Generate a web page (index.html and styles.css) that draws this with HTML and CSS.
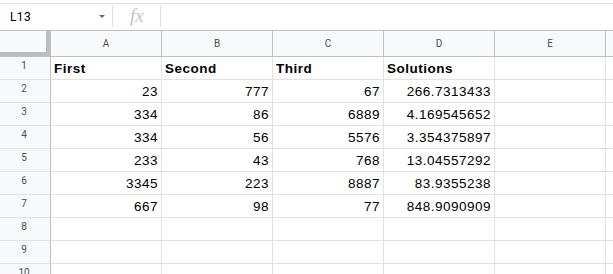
FILE: index.html
```html
<!DOCTYPE html>
<html lang="en">
<head>
    <meta charset="UTF-8">
    <meta name="viewport" content="width=device-width, initial-scale=1.0">
    <title>Sheet</title>
    <link rel="stylesheet" href="styles.css">
</head>
<body>
    <div class="formula-bar">
        <div class="name-box">
            <span class="cell-ref">L13</span>
            <span class="caret"></span>
        </div>
        <div class="fx">fx</div>
        <div class="formula-input"></div>
    </div>

    <div class="grid">
        <div class="corner"></div>
        <div class="col-head">A</div>
        <div class="col-head">B</div>
        <div class="col-head">C</div>
        <div class="col-head">D</div>
        <div class="col-head">E</div>
        <div class="col-head"></div>

        <div class="row-head">1</div>
        <div class="cell bold">First</div>
        <div class="cell bold">Second</div>
        <div class="cell bold">Third</div>
        <div class="cell bold">Solutions</div>
        <div class="cell"></div>
        <div class="cell"></div>

        <div class="row-head">2</div>
        <div class="cell num">23</div>
        <div class="cell num">777</div>
        <div class="cell num">67</div>
        <div class="cell num">266.7313433</div>
        <div class="cell"></div>
        <div class="cell"></div>

        <div class="row-head">3</div>
        <div class="cell num">334</div>
        <div class="cell num">86</div>
        <div class="cell num">6889</div>
        <div class="cell num">4.169545652</div>
        <div class="cell"></div>
        <div class="cell"></div>

        <div class="row-head">4</div>
        <div class="cell num">334</div>
        <div class="cell num">56</div>
        <div class="cell num">5576</div>
        <div class="cell num">3.354375897</div>
        <div class="cell"></div>
        <div class="cell"></div>

        <div class="row-head">5</div>
        <div class="cell num">233</div>
        <div class="cell num">43</div>
        <div class="cell num">768</div>
        <div class="cell num">13.04557292</div>
        <div class="cell"></div>
        <div class="cell"></div>

        <div class="row-head">6</div>
        <div class="cell num">3345</div>
        <div class="cell num">223</div>
        <div class="cell num">8887</div>
        <div class="cell num">83.9355238</div>
        <div class="cell"></div>
        <div class="cell"></div>

        <div class="row-head">7</div>
        <div class="cell num">667</div>
        <div class="cell num">98</div>
        <div class="cell num">77</div>
        <div class="cell num">848.9090909</div>
        <div class="cell"></div>
        <div class="cell"></div>

        <div class="row-head">8</div>
        <div class="cell"></div>
        <div class="cell"></div>
        <div class="cell"></div>
        <div class="cell"></div>
        <div class="cell"></div>
        <div class="cell"></div>

        <div class="row-head">9</div>
        <div class="cell"></div>
        <div class="cell"></div>
        <div class="cell"></div>
        <div class="cell"></div>
        <div class="cell"></div>
        <div class="cell"></div>

        <div class="row-head">10</div>
        <div class="cell"></div>
        <div class="cell"></div>
        <div class="cell"></div>
        <div class="cell"></div>
        <div class="cell"></div>
        <div class="cell"></div>
    </div>
</body>
</html>
```

FILE: styles.css
```css
body {
    margin: 0;
    padding-top: 3px;
    background: #fff;
    font-family: "Liberation Sans", Arial, sans-serif;
    overflow: hidden;
}
.formula-bar {
    display: flex;
    align-items: stretch;
    height: 28px;
    box-sizing: border-box;
    border-top: 1px solid #e1e1e1;
    border-bottom: 1px solid #c0c0c0;
}
.name-box {
    display: flex;
    align-items: center;
    width: 113px;
    box-sizing: border-box;
    padding: 0 7px 0 10px;
    margin: 1px 0 3px;
    border-right: 1px solid #e1e1e1;
}
.cell-ref {
    flex: 1;
    font-family: Roboto, sans-serif;
    font-size: 12px;
    letter-spacing: 0.4px;
    color: #000;
    padding-top: 1px;
}
.caret {
    width: 0;
    height: 0;
    border-left: 3px solid transparent;
    border-right: 3px solid transparent;
    border-top: 3px solid #666;
    margin-top: 1px;
}
.fx {
    width: 48px;
    box-sizing: border-box;
    margin: 1px 0 3px;
    border-right: 1px solid #e1e1e1;
    font-family: "Liberation Serif", serif;
    font-style: italic;
    font-size: 19px;
    color: #c4c4c4;
    line-height: 22px;
    padding-left: 17px;
}
.formula-input {
    flex: 1;
}
.grid {
    display: grid;
    grid-template-columns: 51px repeat(6, 111px);
    grid-auto-rows: 23px;
    grid-template-rows: 26px;
}
.corner,
.col-head {
    background: #f8f9fa;
    box-sizing: border-box;
    border-right: 1px solid #c0c0c0;
    border-bottom: 1px solid #c0c0c0;
}
.corner {
    box-shadow: inset -4px -4px 0 #bdbdbd;
}
.col-head {
    font-family: Roboto, sans-serif;
    font-size: 10px;
    color: #4d4d4d;
    text-align: center;
    line-height: 25px;
}
.row-head {
    background: #f8f9fa;
    box-sizing: border-box;
    border-right: 1px solid #c0c0c0;
    border-bottom: 1px solid #e2e2e2;
    font-family: Roboto, sans-serif;
    font-size: 10px;
    color: #4d4d4d;
    text-align: center;
    line-height: 18px;
    padding-right: 2px;
}
.cell {
    box-sizing: border-box;
    border-right: 1px solid #e2e2e2;
    border-bottom: 1px solid #e2e2e2;
    padding: 1px 3px 0;
    font-size: 13.5px;
    letter-spacing: 0.5px;
    line-height: 21px;
    color: #000;
    white-space: nowrap;
    overflow: hidden;
}
.num {
    text-align: right;
}
.bold {
    font-weight: bold;
}
```
